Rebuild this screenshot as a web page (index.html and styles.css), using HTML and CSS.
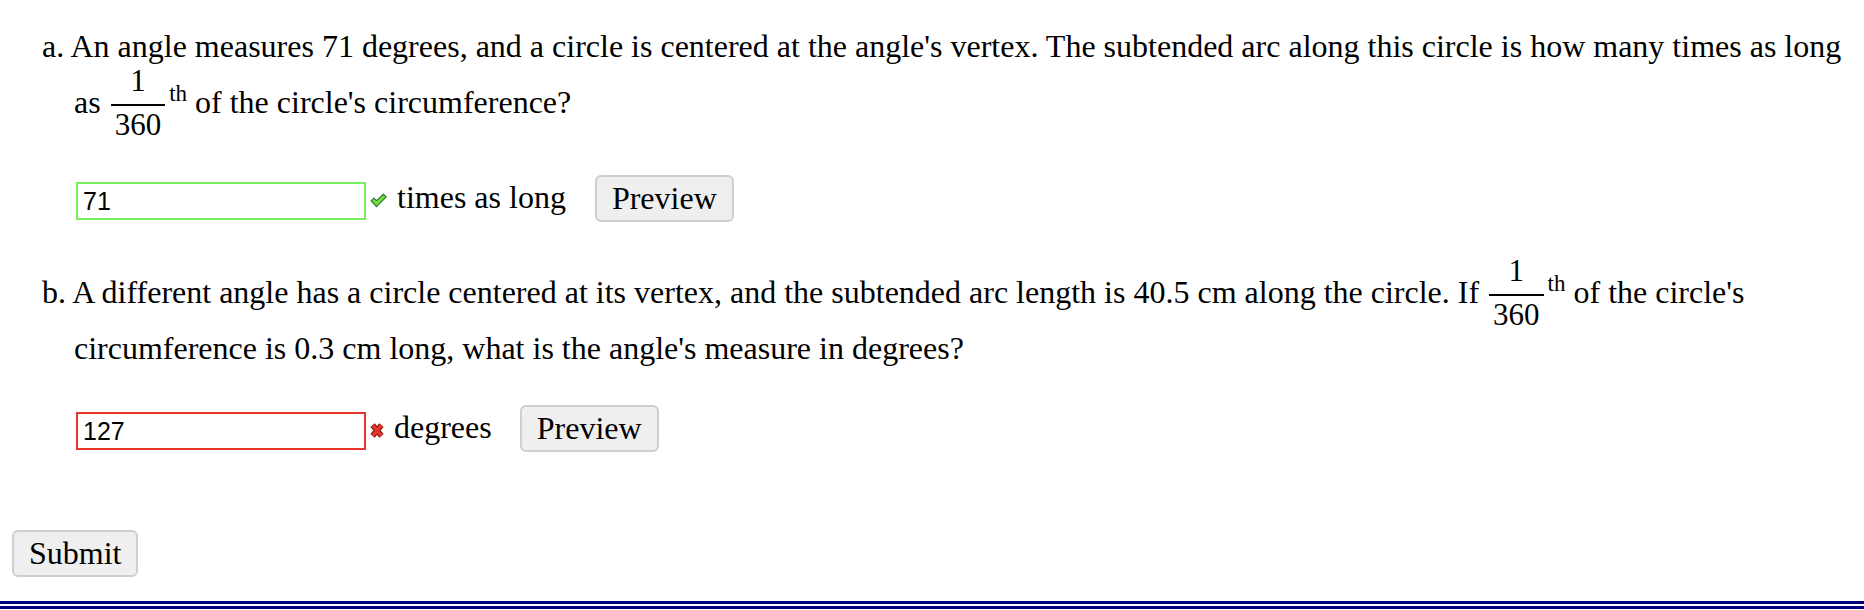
FILE: index.html
```html
<!DOCTYPE html>
<html>
<head>
<meta charset="utf-8">
<link rel="stylesheet" href="styles.css">
</head>
<body>
<form class="problem">
  <p class="stmt stmt-a">a. An angle measures 71 degrees, and a circle is centered at the angle's vertex. The subtended arc along this circle is how many times as long as <span class="frac"><span class="num">1</span><span class="den">360</span></span><sup class="th">th</sup> of the circle's circumference?</p>
  <div class="answer-row row-a">
    <input class="answer correct" type="text" value="71">
    <span class="mark mark-ok"><svg width="17" height="15" viewBox="0 0 13 11"><path d="M0.8 5.8 L3 3.6 L5 5.6 L10.2 0.6 L12.4 2.8 L5 10.2 Z" fill="#6ddf3c" stroke="#2f6b2f" stroke-width="0.8" stroke-linejoin="round"/></svg></span>
    <span class="unit">times as long</span>
    <button type="button" class="btn preview">Preview</button>
  </div>
  <p class="stmt stmt-b">b. A different angle has a circle centered at its vertex, and the subtended arc length is 40.5 cm along the circle. If <span class="frac"><span class="num">1</span><span class="den">360</span></span><sup class="th">th</sup> of the circle's circumference is 0.3 cm long, what is the angle's measure in degrees?</p>
  <div class="answer-row row-b">
    <input class="answer incorrect" type="text" value="127">
    <span class="mark mark-bad"><svg width="14" height="17" viewBox="0 0 11 13"><path d="M2 2.3 L9 10.7 M9 2.3 L2 10.7" stroke="#7a1f1f" stroke-width="4.4"/><path d="M2 2.3 L9 10.7 M9 2.3 L2 10.7" stroke="#e8332b" stroke-width="2.8"/></svg></span>
    <span class="unit">degrees</span>
    <button type="button" class="btn preview">Preview</button>
  </div>
</form>
<div class="submit-row">
  <button type="button" class="btn submit">Submit</button>
</div>
<div class="rule"></div>
</body>
</html>
```

FILE: styles.css
```css
html, body {
  margin: 0;
  padding: 0;
  background: #ffffff;
}

body {
  font-family: "Liberation Serif", "Times New Roman", serif;
  font-size: 32px;
  color: #000000;
}

.problem {
  margin: 0;
  padding: 0 8px 0 74px;
}

.stmt {
  margin: 0;
  line-height: 56px;
  text-indent: -32px;
}

.stmt-a {
  padding-top: 18px;
}

.stmt-b {
  margin-top: 42px;
}

.frac {
  display: inline-block;
  text-indent: 0;
  font-size: 31px;
  text-align: center;
  vertical-align: -22px;
  margin: -12px 4px -10px 2px;
}

.num,
.den {
  display: block;
  line-height: 30px;
  padding: 0 4px;
}

.num {
  padding-bottom: 8px;
  border-bottom: 2px solid #000000;
}

.den {
  padding-top: 4px;
}

.th {
  font-size: 23px;
  line-height: 0;
  vertical-align: 12px;
}

.answer-row {
  display: flex;
  align-items: flex-start;
  height: 47px;
}

.row-a {
  margin-top: 45px;
}

.row-b {
  margin-top: 29px;
}

.answer {
  box-sizing: border-box;
  width: 290px;
  height: 38px;
  margin: 7px 0 0 2px;
  padding: 0 5px;
  border: 2px solid;
  border-radius: 0;
  outline: none;
  font-family: "Liberation Sans", Arial, sans-serif;
  font-size: 25px;
  color: #000000;
  background: #ffffff;
}

.correct {
  border-color: #76ee5a;
}

.incorrect {
  border-color: #e8352b;
}

.mark {
  display: block;
  margin-left: 4px;
}

.mark svg {
  display: block;
}

.mark-ok {
  margin-top: 18px;
}

.mark-bad {
  margin-top: 17px;
}

.unit {
  display: block;
  line-height: 45px;
  margin-left: 10px;
}

.row-b .unit {
  margin-left: 10px;
}

.btn {
  box-sizing: border-box;
  height: 47px;
  padding: 0 15px;
  border: 2px solid #cfcfcf;
  border-radius: 6px;
  background: #efefef;
  font-family: "Liberation Serif", "Times New Roman", serif;
  font-size: 32px;
  color: #000000;
}

.preview {
  margin-left: 29px;
}

.row-b .preview {
  margin-left: 28px;
}

.submit-row {
  margin-top: 78px;
  padding-left: 12px;
}

.rule {
  margin-top: 24px;
  height: 2px;
  border-top: 3px solid #000080;
  border-bottom: 3px solid #000080;
}
```
